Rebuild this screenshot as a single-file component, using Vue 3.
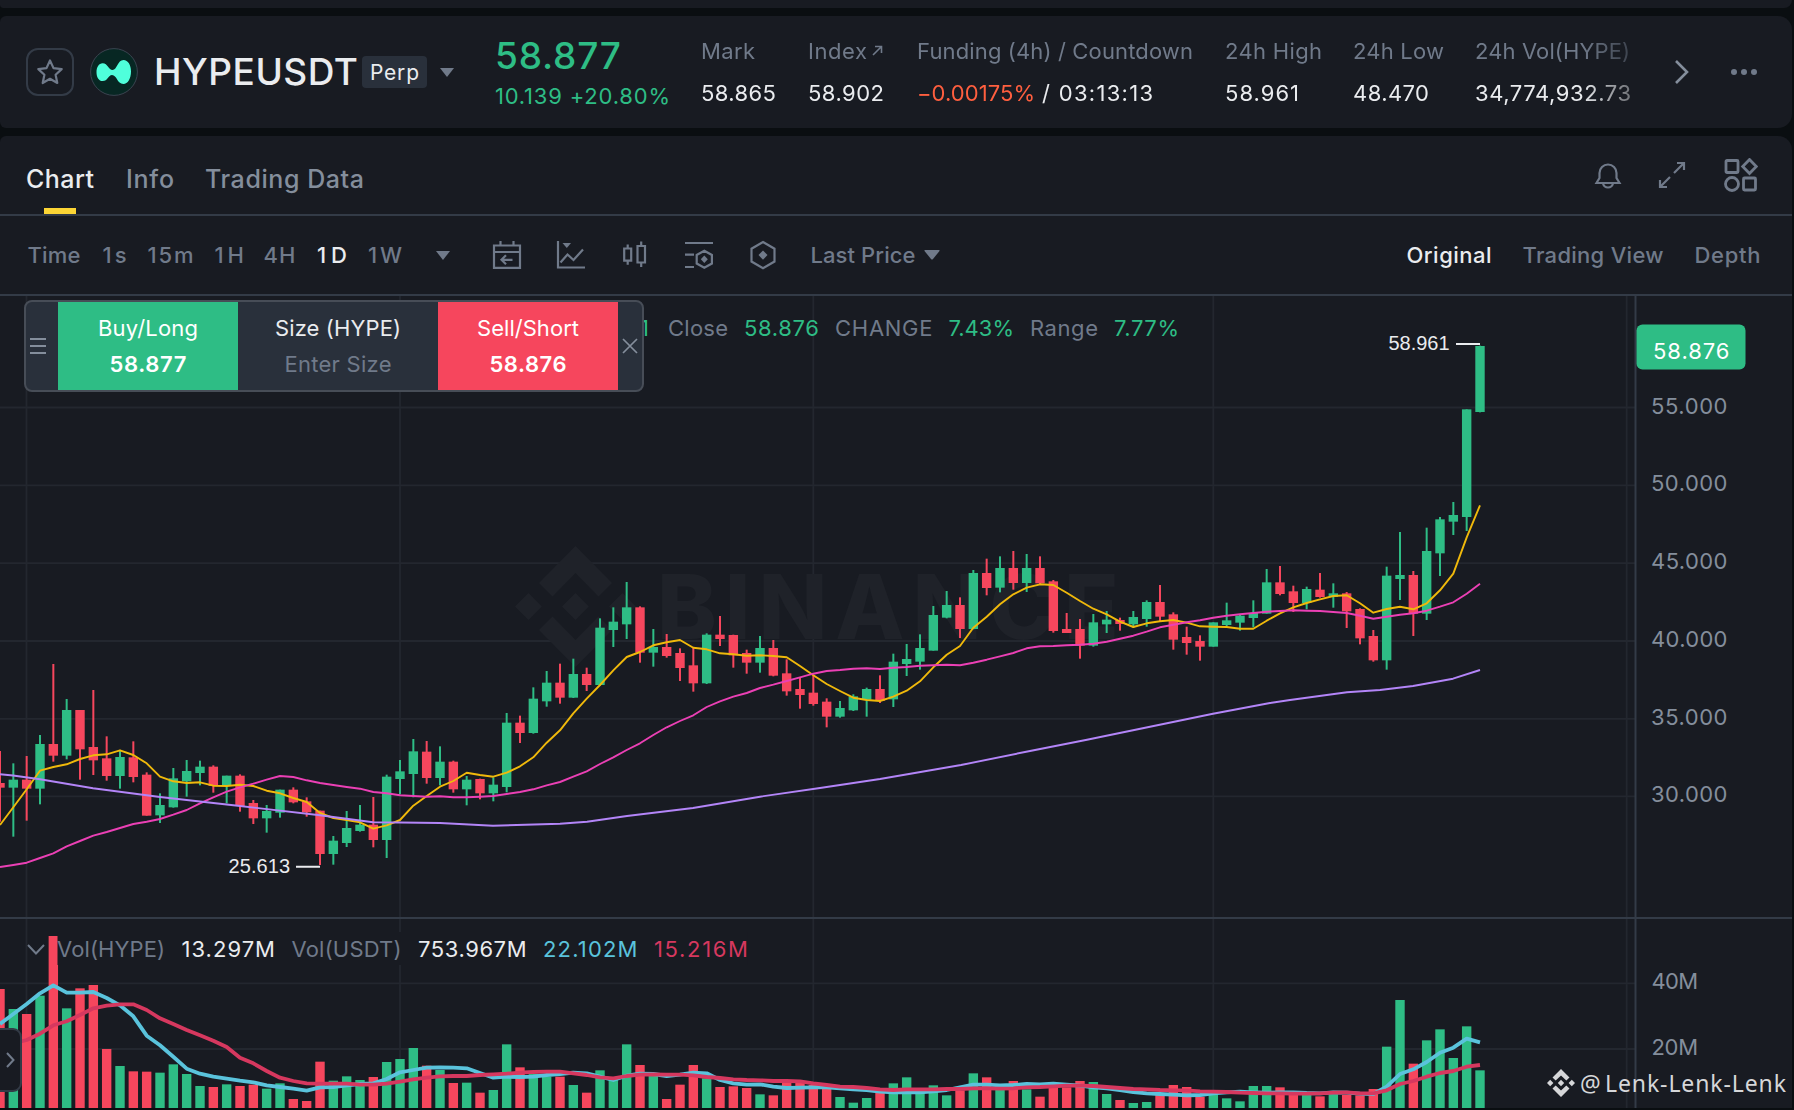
<script setup>
// Stretches a label to its design width by adjusting tracking.
const vFit = (el, { value }) => {
  el.style.letterSpacing = '0px'
  el.style.width = 'auto'
  const natural = el.getBoundingClientRect().width
  const n = Math.max(1, el.textContent.trim().length - 1)
  el.style.letterSpacing = `${(value - natural) / n}px`
  el.style.width = `${value}px`
}

const stats = [
  { label: 'Mark', lw: 54, value: '58.865', vw: 75, w: 75 },
  { label: 'Index', lw: 59, value: '58.902', vw: 76, w: 77, link: true },
  { label: 'Funding (4h) / Countdown', lw: 276, rate: '−0.00175%', rw: 118, value: '/ 03:13:13', vw: 111, w: 276 },
  { label: '24h High', lw: 97, value: '58.961', vw: 74, w: 96 },
  { label: '24h Low', lw: 91, value: '48.470', vw: 76, w: 90 },
  { label: '24h Vol(HYPE)', lw: 155, value: '34,774,932.73', vw: 156, w: 157 },
]

const intervals = [
  ['Time', 53, 27.5], ['1s', 24, 22], ['15m', 46, 21], ['1H', 29.5, 21], ['4H', 32, 19.5], ['1D', 30, 21.5], ['1W', 34, 21],
]

const legend = [
  ['Close', 60, 'mut'], ['58.876', 75, 'up'], ['CHANGE', 97.5, 'mut'], ['7.43%', 65.5, 'up'], ['Range', 68, 'mut'], ['7.77%', 65, 'up'],
]

const volLegend = [
  ['Vol(HYPE)', 108, 'mut'], ['13.297M', 93.5, 'fg'], ['Vol(USDT)', 110, 'mut'], ['753.967M', 108.5, 'fg'], ['22.102M', 94.5, 'cyan'], ['15.216M', 94, 'rose'],
]

const STEP = 40 / 3
const xOf = (i) => i * STEP

// Series are stored in thirds of a pixel below each block's base line.
// Candle: direction high top bottom low
const candleBlocks = [
  { base: 640, rows: `r 333 429 443 545|g 370 419 443 590|r 348 419 446 542|g 285 312 446 493|r 72 312 347 365|g 177 210 347 358|r 210 210 328 419|r 150 321 361 405|r 289 355 408 422|g 333 351 408 446|r 304 352 411 427|r 397 404 527 527|g 460 495 526 549|g 384 415 502 503|g 360 393 424 470|g 362 380 399 436|r 376 380 438 458|g 407 407 438 490|r 403 407 498 515|r 480 489 535 552|g 495 513 535 578|g 449 449 518 533|r 442 449 487 490|r 472 484 517 530|r 512 512 642 675|g 588 602 642 674|g 513 564 609 621|g 495 554 573 575|r 471 554 600 622|g 404 410 600 654|g 360 394 417 463|g 297 334 402 472` },
  { base: 560, rows: `r 543 575 654 671|g 559 605 654 676|r 602 605 688 698|g 648 659 688 736|r 656 657 700 718|g 652 674 700 724|g 459 488 681 697|r 467 488 519 549|g 382 416 519 521|g 333 368 424 440|r 311 368 413 431|g 296 342 413 414|r 323 342 375 393|g 175 203 375 377|g 142 185 210 261|g 66 142 193 237|r 139 142 278 308|g 207 261 278 320|r 222 261 288 293|r 265 279 324 363|r 263 316 370 395|g 220 224 370 372|r 168 224 237 258|r 224 225 286 323|r 269 279 308 341|g 228 264 308 338|r 240 264 347 349|r 298 340 394 407|r 351 387 405 446|r 346 398 432 437` },
  { base: 530, rows: `r 505 515 560 592|g 513 534 560 563|g 493 499 541 543|g 473 477 509 560|r 436 477 513 519|g 371 395 508 531|g 342 387 402 438|g 313 354 395 419|g 228 255 362 362|g 183 225 263 265|r 202 225 297 324|g 120 129 297 298|r 86 129 174 196|g 79 114 173 187|r 63 114 159 179|g 72 114 159 186|r 79 114 160 162|r 150 154 303 308|r 249 297 309 309|r 267 297 347 386|g 252 277 347 350|g 243 269 283 309|r 263 270 282 302|g 243 261 283 293|g 211 216 267 290|r 165 216 260 275|r 247 253 329 359|r 290 321 339 374|r 316 333 350 392|g 277 277 350 350` },
  { base: 320, rows: `g 848 901 915 918|g 884 887 908 932|g 841 879 894 922|g 747 787 881 881|r 738 787 822 826|r 797 814 849 876|g 800 807 849 868|r 759 809 831 833|g 790 820 831 863|r 816 820 874 924|r 865 867 955 973|r 930 948 1021 1025|g 740 767 1021 1049|g 636 765 777 840|r 753 765 881 948|g 623 693 881 900|g 591 598 700 768|g 546 585 605 645|g 268 268 591 633|g 77 78 276 277` },
]
const candles = candleBlocks
  .flatMap(({ base, rows }) => rows.split('|').map((row) => {
    const [dir, ...v] = row.split(' ')
    const [high, top, bottom, low] = v.map((n) => base + n / 3)
    return { dir, high, top, bottom, low }
  }))
  .map((c, i) => ({ ...c, x: xOf(i) }))

const series = (blocks) => blocks
  .flatMap(([base, str]) => str.split(' ').map((n) => base + n / 3))
  .map((y, i) => `${xOf(i).toFixed(1)},${y.toFixed(1)}`)
  .join(' ')

const ma7 = series([
  [640, '555 502 448 392 381 373 357 346 343 331 345 370 410 424 429 427 437 438 434 438 452 460 474 486 519 534 540 547 566 556 540 497'],
  [560, '708 680 663 638 645 650 638 619 592 548 511 460 416 375 331 291 276 256 247 240 263 268 280 283 287 286 288 292 318 346'],
  [530, '462 483 503 510 513 500 482 454 412 374 348 293 260 223 193 173 163 165 188 213 236 253 275 291 280 274 270 278 289 290'],
  [320, '921 926 926 902 880 862 849 838 828 826 850 878 867 860 868 850 811 761 652 556'],
])
const ma25 = series([
  [640, '681 675 668 654 640 619 603 587 576 564 552 545 537 524 510 490 472 455 442 431 419 408 411 421 429 435 441 446 456 460 466 468'],
  [560, '710 709 712 712 710 708 702 696 688 676 666 650 634 612 592 570 550 525 502 483 466 441 424 410 399 384 374 363 352 341'],
  [530, '423 420 416 415 417 413 411 407 406 404 406 398 389 379 369 355 349 348 346 344 341 335 326 317 305 292 284 277 271 263'],
  [320, '887 883 879 875 873 871 872 873 876 879 887 896 890 884 880 872 860 847 821 791'],
])
const ma99 = '0,774.3 13,775.5 40,779.3 93,788.3 160,797 240,806 320,815.3 373,822.3 400,822.5 440,823 493,825.7 560,823.7 587,821.7 627,816 693,808 760,796.7 820,788 880,779 961,765 1030,751 1087,739.7 1213,713.7 1270,703 1290,700 1347,692.3 1380,690 1413,686 1453,678.7 1480,670'

const volTops = '267 327 342 287 108 325 265 255 447 498 514 515 518 493 522 558 561 553 558 554 566 550 597 603 485 542 529 540 531 486 477 444 497 510 549 548 578 570 433 502 522 530 530 555 578 511 537 433 495 528 597 554 495 535 561 559 564 583 586 547 543 555 566 591 608 594 577 550 532 572 556 586 571 520 532 570 543 568 590 563 562 543 546 582 600 609 606 585 555 561 590 583 595 604 558 558 562 585 585 589 583 585 586 567 440 300 491 421 388 474 379 511'
  .split(' ').map((n) => 900 + n / 3)
const volMa5 = series([[900, '372 342 312 280 256 278 278 276 294 316 349 407 436 470 506 521 530 536 542 547 556 561 566 572 562 561 556 552 550 537 517 510 503 502 503 505 519 533 530 531 530 525 522 518 520 530 540 527 521 522 528 524 518 520 540 550 554 553 560 564 563 562 562 565 568 570 575 577 576 577 574 570 562 554 554 556 555 552 553 551 554 557 562 565 570 576 580 582 584 586 585 580 577 575 577 578 577 577 579 580 577 578 581 582 560 522 508 486 458 443 416 427']])
const volMa10 = series([[900, '440 430 420 401 376 364 345 325 317 313 313 330 355 372 390 406 422 441 473 490 513 533 543 550 551 551 551 554 554 551 545 538 533 529 528 528 525 523 521 518 516 515 515 520 525 532 535 528 524 523 524 524 526 531 534 538 540 541 543 543 544 550 555 560 561 564 568 570 568 568 568 567 567 565 565 566 565 562 561 559 557 557 558 561 564 567 568 570 571 571 574 575 576 578 579 580 580 581 581 580 578 577 580 580 571 552 543 530 519 513 500 495']])

const priceGrid = [
  { y: 407.5, label: '55.000' }, { y: 485.3, label: '50.000' }, { y: 563.1, label: '45.000' },
  { y: 641, label: '40.000' }, { y: 718.8, label: '35.000' }, { y: 796.4, label: '30.000' },
]
const volGrid = [{ y: 983.3, label: '40M' }, { y: 1049, label: '20M' }]
const timeGrid = [26.5, 400, 813.3, 1213.3, 1626.7]
</script>

<template>
  <div class="page">
    <div class="strip"></div>

    <header class="ticker">
      <button class="fav">
        <svg width="28" height="28" viewBox="0 0 28 28"><path d="M14 2.5l3.5 7.6 8.2 1-6.1 5.6 1.7 8.3-7.3-4.2-7.3 4.2 1.7-8.3-6.1-5.6 8.2-1z" /></svg>
      </button>
      <svg class="coin" width="48" height="48" viewBox="0 0 48 48">
        <circle cx="24" cy="24" r="23.4" fill="#072723" stroke="#3a4450" />
        <path d="M41 23.5c0 7-3.300 12.500-7.600 12.500-6.400 0-6.400-9-11.400-9-3.700 0-4.300 6.100-9.300 6.100C8.700 33.100 6.500 29 6.500 24.200S8.700 15.300 12.700 15.300c5 0 6.100 6.800 9.800 6.800 4.700 0 4.900-10 11-10 4.500 0 7.500 5 7.500 11.400z" fill="#4fffdb" />
      </svg>
      <span v-fit="204" class="pair">HYPEUSDT</span>
      <span class="badge"><span v-fit="49">Perp</span></span>
      <svg class="caret pair-caret" width="14" height="9" viewBox="0 0 14 9"><path d="M0 0h14L7 9z" /></svg>
      <div class="last">
        <div class="last-price"><span v-fit="126">58.877</span></div>
        <div class="last-change"><span v-fit="175">10.139 +20.80%</span></div>
      </div>
      <div class="stats">
        <div v-for="s in stats" :key="s.label" class="stat" :style="{ width: s.w + 'px' }">
          <div class="line mut">
            <span v-fit="s.lw">{{ s.label }}</span>
            <svg v-if="s.link" class="ext" width="11" height="11" viewBox="0 0 11 11"><path d="M1 10L9.500 1.500M3 1.500h6.500V8" /></svg>
          </div>
          <div class="line">
            <span v-if="s.rate" v-fit="s.rw" class="rate">{{ s.rate }}</span>
            <span v-fit="s.vw">{{ s.value }}</span>
          </div>
        </div>
      </div>
      <svg class="next" width="16" height="26" viewBox="0 0 16 26"><path d="M2 2l11 11L2 24" /></svg>
      <svg class="more" width="28" height="8" viewBox="0 0 28 8"><circle cx="4" cy="4" r="3" /><circle cx="14" cy="4" r="3" /><circle cx="24" cy="4" r="3" /></svg>
    </header>

    <section class="panel">
      <nav class="tabs">
        <a class="tab active"><span v-fit="68">Chart</span></a>
        <a class="tab info"><span v-fit="48">Info</span></a>
        <a class="tab data"><span v-fit="159">Trading Data</span></a>
        <svg class="ico bell" width="28" height="28" viewBox="0 0 28 28"><path d="M5.500 12a8.500 8.500 0 0 1 17 0v5l3 5h-23l3-5z" /><path d="M9 22.500c.7 2.500 2.500 4 5 4s4.300-1.500 5-4" /></svg>
        <svg class="ico expand" width="28" height="28" viewBox="0 0 28 28"><path d="M16 12L26 2M19 2h7v7M12 16L2 26M9 26H2v-7" /></svg>
        <svg class="ico widgets" width="34" height="34" viewBox="0 0 34 34"><rect x="2" y="2.500" width="12" height="12" rx="1" /><path d="M25.500 1.500l6.800 7-6.800 7-6.800-7z" /><circle cx="8" cy="26" r="6.500" /><rect x="19.500" y="20" width="12" height="12" rx="1" /></svg>
      </nav>

      <div class="toolbar">
        <span v-for="[t, w, gap] in intervals" :key="t" v-fit="w" :class="['itv', { on: t === '1D' }]" :style="{ marginLeft: gap + 'px' }">{{ t }}</span>
        <svg class="caret itv-caret" width="14" height="9" viewBox="0 0 14 9"><path d="M0 0h14L7 9z" /></svg>
        <svg class="ico tool" width="30" height="30" viewBox="0 0 30 30"><path d="M2 5.500h26v22.300H2zM2 12h26M8.500 1v4.500M21.500 1v4.500M20.500 19.800H10M14 15.300l-4.500 4.500 4.500 4.500" /></svg>
        <svg class="ico tool" width="30" height="30" viewBox="0 0 30 30"><path d="M2 1v26.500h27M4.500 22.500l7-8 6 5.500 9.500-10.500" /><path class="solid" d="M6.500 3h8.500l-4.200 5z" /></svg>
        <svg class="ico tool" width="30" height="30" viewBox="0 0 30 30"><path d="M4.200 8.500h7v12.200h-7zM7.700 4.500v4M7.700 20.700v4M17.500 6h7.500v16.500h-7.500zM21.200 1.500V6M21.200 22.500V27" /></svg>
        <svg class="ico tool" width="30" height="30" viewBox="0 0 30 30"><path d="M1 3h28M1 14.700h9M1 27h9M20.300 10.700l7.600 4.300v8.500l-7.600 4.300-7.600-4.300V15z" /><path class="solid" d="M20.300 15.500l3.500 3.800-3.500 3.800-3.500-3.800z" /></svg>
        <svg class="ico tool" width="30" height="30" viewBox="0 0 30 30"><path d="M15 2l11.500 6.700v12.800L15 28.200 3.500 21.500V8.700z" /><path class="solid" d="M15 10.500l4.500 4.600-4.500 4.600-4.500-4.600z" /></svg>
        <span v-fit="105" class="itv last-px">Last Price</span>
        <svg class="caret px-caret" width="16" height="10" viewBox="0 0 16 10"><path d="M1 0h14q1 0 .5 1L9 9q-1 1-2 0L.5 1Q0 0 1 0z" /></svg>
        <div class="views">
          <span v-fit="85" class="itv on">Original</span>
          <span v-fit="141" class="itv">Trading View</span>
          <span v-fit="66" class="itv">Depth</span>
        </div>
      </div>

      <div class="chart">
        <svg class="plot" width="1792" height="812" viewBox="0 296 1792 812">
          <g class="grid">
            <path v-for="x in timeGrid" :key="x" :d="`M${x} 296V1108`" />
            <path v-for="g in [...priceGrid, ...volGrid]" :key="g.y" :d="`M0 ${g.y}H1635`" />
          </g>
          <g class="brand">
            <path d="M575.500 546l36.500 37-13.500 13.500-23-23.500-23 23.500L539 583zM528.500 593l13.300 13.500-13.300 13.500L515 606.500zM575.500 593l13.300 13.500-13.300 13.500L562 606.500zM622.500 593l13.300 13.500-13.300 13.500L609 606.500zM539 630l13.500-13.500 23 23.500 23-23.500L612 630l-36.500 37z" />
            <text x="657" y="639" textLength="462">BINANCE</text>
          </g>
          <g class="volume">
            <rect v-for="(y, i) in volTops" :key="i" :class="candles[i].dir" :x="xOf(i) - 4.700" :y="y" width="9.400" :height="1108 - y" />
          </g>
          <rect class="veil" x="57.500" y="932" width="690" height="33" />
          <polyline class="vma5" :points="volMa5" />
          <polyline class="vma10" :points="volMa10" />
          <g v-for="c in candles" :key="c.x" :class="c.dir">
            <rect :x="c.x - 1" :y="c.high" width="2" :height="c.low - c.high" />
            <rect :x="c.x - 4.700" :y="c.top" width="9.400" :height="c.bottom - c.top" />
          </g>
          <polyline class="ma7" :points="ma7" />
          <polyline class="ma25" :points="ma25" />
          <polyline class="ma99" :points="ma99" />
          <path class="rule" d="M1635.500 296V1108M0 918H1792" />
          <g class="extreme">
            <text x="1388.500" y="350" textLength="61">58.961</text>
            <path d="M1456 344h24M296 866.700h24" />
            <text x="228.500" y="873" textLength="61.500">25.613</text>
          </g>
          <g class="axis">
            <text v-for="g in priceGrid" :key="g.label" x="1651" :y="g.y + 6" textLength="76.500">{{ g.label }}</text>
            <text v-for="g in volGrid" :key="g.label" x="1651.500" :y="g.y + 6" textLength="46.500">{{ g.label }}</text>
          </g>
          <rect class="tag" x="1636.500" y="324.500" width="109" height="45" rx="6" />
          <text class="tag-text" x="1653" y="358.500" textLength="76.500">58.876</text>
        </svg>

        <span class="up open-tail">1</span>
        <div class="legend ohlc">
          <span v-for="[t, w, c] in legend" :key="t" v-fit="w" :class="c">{{ t }}</span>
        </div>

        <div class="order">
          <div class="grip"><i></i><i></i><i></i></div>
          <button class="side buy"><span v-fit="100">Buy/Long</span><b v-fit="77">58.877</b></button>
          <div class="size"><span v-fit="126">Size (HYPE)</span><span v-fit="107" class="mut">Enter Size</span></div>
          <button class="side sell"><span v-fit="102">Sell/Short</span><b v-fit="77">58.876</b></button>
          <div class="close"><svg width="16" height="16" viewBox="0 0 16 16"><path d="M1 1l14 14M15 1L1 15" /></svg></div>
        </div>

        <div class="legend vol">
          <svg width="18" height="11" viewBox="0 0 18 11"><path d="M1 1l8 8.500L17 1" /></svg>
          <span v-for="[t, w, c] in volLegend" :key="t" v-fit="w" :class="c">{{ t }}</span>
        </div>

        <div class="drawer"><svg width="9" height="16" viewBox="0 0 9 16"><path d="M1 1l6.500 7L1 15" /></svg></div>

        <div class="credit">
          <svg width="28" height="28" viewBox="0 0 28 28"><path d="M14 0l8.500 8.400-3.200 3.200L14 6.400l-5.300 5.200-3.200-3.200zM3.200 10.800L6.400 14l-3.200 3.200L0 14zM14 10.800l3.200 3.200-3.200 3.200-3.200-3.200zM24.800 10.800L28 14l-3.200 3.200-3.200-3.200zM5.500 19.600l3.200-3.200 5.300 5.200 5.300-5.200 3.200 3.200L14 28z" /></svg>
          <span v-fit="20">@</span>
          <span v-fit="181" class="user">Lenk-Lenk-Lenk</span>
        </div>
      </div>
    </section>
  </div>
</template>

<style>
body { margin: 0; background: #0a0e11; }
</style>

<style scoped>
.page {
  width: 1794px; height: 1110px; overflow: hidden; background: #0a0e11;
  font: 400 22px/42px Inter, sans-serif; color: #eaecef; white-space: nowrap;
  display: flex; flex-direction: column; gap: 8px;
}
.page span, .page b { display: inline-block; flex: none; }
.page svg { flex: none; display: block; }
.strip { width: 1792px; height: 8px; background: #181b22; border-radius: 0 0 14px 6px; }
button { font: inherit; color: inherit; border: 0; padding: 0; background: none; letter-spacing: inherit; }
.mut { color: #707a8a; }
.up { color: #2ebd85; }
.fg { color: #eaecef; }
.cyan { color: #5ac3dc; }
.rose { color: #d6385f; }

.ticker {
  width: 1792px; height: 112px; box-sizing: border-box; padding-left: 26px;
  background: #181b22; border-radius: 6px 14px 14px 6px;
  display: flex; align-items: center;
}
.fav {
  width: 48px; height: 48px; box-sizing: border-box; border: 2px solid #333b47; border-radius: 12px;
  display: flex; align-items: center; justify-content: center;
}
.fav path { fill: none; stroke: #707a8a; stroke-width: 2.2; stroke-linejoin: round; }
.coin { margin-left: 16px; }
.pair { font-size: 37px; font-weight: 500; margin-left: 16px; }
.badge {
  margin-left: 4px; width: 65px; height: 32px; line-height: 33px; border-radius: 4px; background: #29303b;
  text-align: center; font-size: 21px;
}
.caret path { fill: #707a8a; }
.pair-caret { margin-left: 13px; }
.last { margin-left: 41px; width: 174px; padding-top: 8px; color: #2ebd85; }
.last-price, .last-change { height: 40px; line-height: 40px; }
.last-price { font-size: 37px; font-weight: 500; }
.stats {
  margin-left: 32px; width: 934px; display: flex; gap: 32px; overflow: hidden; flex: none;
  -webkit-mask-image: linear-gradient(to right, #000 880px, transparent 965px);
  mask-image: linear-gradient(to right, #000 880px, transparent 965px);
}
.stat { flex: none; }
.line { display: flex; height: 42px; }
.line .rate { color: #ff5f3f; margin-right: 7px; }
.ext { margin: 15px 0 0 5px; }
.ext path { fill: none; stroke: #707a8a; stroke-width: 1.6; }
.next { margin-left: 39px; }
.next path { fill: none; stroke: #848e9c; stroke-width: 2.6; }
.more { margin-left: 40px; fill: #707a8a; }

.panel { width: 1792px; height: 972px; background: #181b22; border-radius: 6px 14px 0 0; overflow: hidden; }
.tabs { height: 78px; border-bottom: 2px solid #333b47; display: flex; align-items: center; padding-left: 26px; }
.tab {
  height: 70px; padding-top: 8px; line-height: 70px; font-size: 25px; font-weight: 500; color: #848e9c;
  display: flex; justify-content: center; position: relative;
}
.tab.active { color: #eaecef; }
.tab.active::after { content: ''; position: absolute; bottom: 0; width: 32px; height: 6px; background: #fcd535; }
.tab.info { margin-left: 32px; }
.tab.data { margin-left: 31px; }
.ico path, .ico rect, .ico circle { fill: none; stroke: #707a8a; stroke-width: 2.2; }
.ico .solid { fill: #707a8a; stroke: none; }
.bell { margin-left: auto; }
.expand { margin-left: 36px; }
.widgets { margin: 0 34.5px 0 37.5px; }
.widgets rect, .widgets path, .widgets circle { stroke-width: 2.8; }

.toolbar { height: 78px; border-bottom: 2px solid #333b47; display: flex; align-items: center; }
.itv { color: #707a8a; font-weight: 500; }
.itv.on { color: #eaecef; }
.itv-caret { margin: 0 8px 0 34px; }
.tool { margin-left: 34px; }
.last-px { margin-left: 32.5px; }
.px-caret { margin-left: 8px; }
.views { margin-left: auto; margin-right: 31.5px; display: flex; gap: 31px; }

.chart { position: relative; height: 812px; }
.grid path { stroke: #23272f; stroke-width: 1.8; }
.brand { fill: #1f2229; }
.brand text { font: 800 90px Inter, sans-serif; }
.g { fill: #2ebd85; }
.r { fill: #f6465d; }
.veil { fill: #181b22; }
polyline { fill: none; stroke-linejoin: round; }
.ma7 { stroke: #f0b90b; stroke-width: 1.9; }
.ma25 { stroke: #eb40b5; stroke-width: 1.9; }
.ma99 { stroke: #b385f8; stroke-width: 1.9; }
.vma5 { stroke: #5ac3dc; stroke-width: 3.8; }
.vma10 { stroke: #d6385f; stroke-width: 3.8; }
.rule { stroke: #333b47; stroke-width: 2; }
.extreme text { font: 20px "Liberation Sans", sans-serif; fill: #eaecef; }
.extreme path { stroke: #eaecef; stroke-width: 2; }
.axis { fill: #848e9c; font-size: 22px; }
.tag { fill: #2ebd85; }
.tag-text { fill: #fff; font-size: 22px; }

.legend { position: absolute; display: flex; align-items: center; line-height: 32px; }
.ohlc { left: 668px; top: 16px; gap: 16px; }
.open-tail { position: absolute; left: 640px; top: 16px; line-height: 32px; }
.vol { left: 27px; top: 637px; gap: 16.5px; }
.vol svg { margin-right: -4.5px; }
.vol path, .close path, .drawer path { fill: none; stroke: #707a8a; stroke-width: 2; }

.order {
  position: absolute; left: 24px; top: 4px; width: 620px; height: 92px; box-sizing: border-box;
  border: 2px solid #474d57; border-radius: 8px; background: #29303b; overflow: hidden; display: flex; line-height: 36px;
}
.grip { width: 32px; display: flex; flex-direction: column; justify-content: center; gap: 5px; }
.grip i { margin-left: 4px; width: 16px; height: 2px; background: #848e9c; }
.side, .size { display: flex; flex-direction: column; align-items: center; justify-content: center; }
.side { width: 180px; color: #fff; }
.side b { font-weight: 600; }
.size { width: 200px; }
.buy { background: #2ebd85; }
.sell { background: #f6465d; }
.close { width: 24px; display: flex; align-items: center; justify-content: center; }
.close path { stroke-width: 1.7; stroke: #848e9c; }

.drawer {
  position: absolute; left: -2px; top: 732px; width: 24px; height: 64px; box-sizing: border-box; padding-left: 6px;
  border: 2px solid #333b47; border-radius: 0 9px 9px 0; background: #181b22; display: flex; align-items: center;
}
.credit {
  position: absolute; left: 1547px; top: 767px; height: 40px; display: flex; align-items: center;
  font: 23px/40px "Noto Sans", sans-serif; color: #d6d7d9;
}
.credit svg { fill: #d6d7d9; margin-right: 5px; }
.credit .user { margin-left: 5px; }
</style>
